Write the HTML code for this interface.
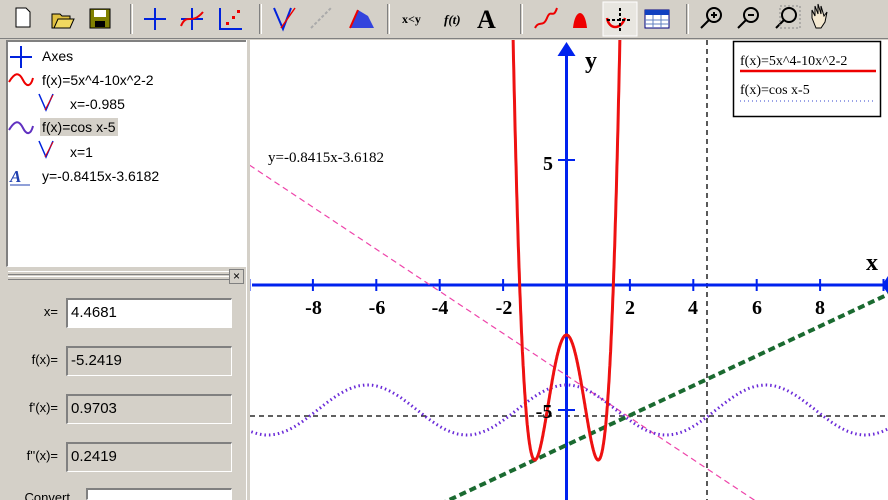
<!DOCTYPE html>
<html style="overflow:hidden;height:500px"><head><meta charset="utf-8">
<style>
body{margin:0;width:888px;height:500px;overflow:hidden;background:#d4d0c8;font-family:"Liberation Sans",Arial,sans-serif;position:relative}
.a{position:absolute}
.sep{position:absolute;top:4px;width:1px;height:30px;border-left:1px solid #808080;border-right:1px solid #fff}
.tree{position:absolute;left:6px;top:40px;width:238px;height:224px;background:#fff;border-top:2px solid #808080;border-left:2px solid #808080;border-right:1px solid #fff;border-bottom:1px solid #fff;font-size:14px;overflow:hidden}
.tree div{position:absolute;white-space:nowrap}
.lbl{position:absolute;font-size:13px;text-align:right;width:58px;left:0}
.fld{position:absolute;left:66px;border-top:2px solid #808080;border-left:2px solid #808080;border-right:1px solid #fff;border-bottom:1px solid #fff;font-size:15px;line-height:26px;padding-left:3px;box-sizing:border-box;width:166px;height:30px}
</style></head><body>
<div class="a" style="left:0;top:0;width:888px;height:38px;background:#d4d0c8;border-bottom:1px solid #808080"></div>
<svg class="a" style="left:0;top:0" width="888" height="38">
<path d="M16 8h10l4 4v15H16z" fill="#fff" stroke="#000"/>
<path d="M52 14h8l2 2h8v12H52z" fill="#e0c040" stroke="#000"/><path d="M54 28l4-9h16l-4 9z" fill="#f0d860" stroke="#000"/>
<rect x="90" y="9" width="20" height="19" fill="#808000" stroke="#000"/><rect x="94" y="10" width="12" height="7" fill="#fff"/><rect x="95" y="21" width="10" height="6" fill="#000"/>
<g stroke="#0022dd" stroke-width="2"><path d="M144 19h22M155 8v22"/></g>
<g stroke="#0022dd" stroke-width="2"><path d="M181 19h22M192 8v22"/></g><path d="M181 26c6-14 10 0 22-14" stroke="#e00" fill="none" stroke-width="2"/>
<path d="M220 8v21h22" stroke="#0022dd" stroke-width="2" fill="none"/><g fill="#e00"><rect x="226" y="22" width="3" height="3"/><rect x="232" y="16" width="3" height="3"/><rect x="237" y="10" width="3" height="3"/></g>
<path d="M274 8l9 21 8-21" stroke="#0022dd" stroke-width="2" fill="none"/><path d="M281 28l14-20" stroke="#e00" stroke-width="1.5"/>
<path d="M311 28l20-20" stroke="#aaa" stroke-width="2" stroke-dasharray="3 2"/>
<path d="M350 28l8-18 10 6 6 12z" fill="#3344dd"/><path d="M350 28l8-18" stroke="#e00" stroke-width="2"/>
<text x="402" y="23" font-family="Liberation Serif" font-size="12" font-weight="bold">x&lt;y</text>
<text x="444" y="24" font-family="Liberation Serif" font-size="13" font-style="italic" font-weight="bold">f(t)</text>
<text x="477" y="28" font-family="Liberation Serif" font-size="26" font-weight="bold">A</text>
<path d="M535 28c4-8 8 0 12-10s6 2 10-10" stroke="#e00" fill="none" stroke-width="2"/>
<path d="M573 28c2-20 12-20 14 0z" fill="#e00"/>
<rect x="603" y="2" width="34" height="34" fill="#e8e6e0" stroke="#fff"/>
<path d="M607 18c2 12 14 12 18 0" stroke="#e00" fill="none" stroke-width="2.5"/><path d="M620 8v24M607 20h24" stroke="#000" stroke-width="2" stroke-dasharray="3 2"/>
<rect x="645" y="10" width="24" height="18" fill="#fff" stroke="#000080"/><rect x="645" y="10" width="24" height="5" fill="#1040c0"/><path d="M645 20h24M645 24h24M653 15v13M661 15v13" stroke="#6080c0"/>
<g fill="none" stroke="#000" stroke-width="2"><circle cx="714" cy="15" r="7"/><path d="M709 20l-8 8M711 15h6M714 12v6"/><circle cx="751" cy="15" r="7"/><path d="M746 20l-8 8M748 15h6"/><circle cx="789" cy="15" r="7"/><path d="M784 20l-8 8"/></g>
<rect x="780" y="6" width="20" height="22" fill="none" stroke="#888" stroke-dasharray="2 2"/>
<path d="M816 28l-4-10v-8l3 6v-10l3 8v-10l3 10v-8l3 10 3-4-2 10-4 6z" fill="#f4e8d0" stroke="#000"/>
</svg>
<div class="sep" style="left:130px"></div><div class="sep" style="left:259px"></div><div class="sep" style="left:387px"></div><div class="sep" style="left:520px"></div><div class="sep" style="left:686px"></div>
<div class="tree">
<svg class="a" style="left:0;top:0" width="60" height="150">
<path d="M2 15h22M13 4v22" stroke="#0022dd" stroke-width="2"/>
<path d="M1 40c6-10 10-10 14-2s8 6 10-2" stroke="#e00" fill="none" stroke-width="2"/>
<path d="M31 52l7 16 7-16" stroke="#0022dd" fill="none" stroke-width="1.5"/><path d="M37 68l8-15" stroke="#e00"/>
<path d="M1 88c6-10 10-10 14-2s8 6 10-2" stroke="#6030c0" fill="none" stroke-width="2"/>
<path d="M31 99l7 16 7-16" stroke="#0022dd" fill="none" stroke-width="1.5"/><path d="M37 115l8-15" stroke="#e00"/>
<text x="2" y="140" font-family="Liberation Serif" font-size="17" font-style="italic" font-weight="bold" fill="#2040b0">A</text><path d="M2 143h20" stroke="#2040b0"/>
</svg>
<div style="left:34px;top:6px">Axes</div>
<div style="left:34px;top:30px">f(x)=5x^4-10x^2-2</div>
<div style="left:62px;top:54px">x=-0.985</div>
<div style="left:32px;top:76px;background:#d4d0c8;padding:1px 2px">f(x)=cos x-5</div>
<div style="left:62px;top:102px">x=1</div>
<div style="left:34px;top:126px">y=-0.8415x-3.6182</div>
</div>
<div class="a" style="left:8px;top:271px;width:225px;height:2px;border-top:1px solid #fff;border-bottom:1px solid #808080"></div>
<div class="a" style="left:8px;top:276px;width:225px;height:2px;border-top:1px solid #fff;border-bottom:1px solid #808080"></div>
<div class="a" style="left:229px;top:269px;width:13px;height:13px;border:1px solid #808080;font-size:12px;line-height:12px;text-align:center;background:#d4d0c8">×</div>
<div class="a" style="left:246px;top:40px;width:3px;height:460px;background:#d4d0c8;border-left:1px solid #fff;border-right:1px solid #808080"></div>
<div class="lbl" style="top:304px">x=</div><div class="fld" style="top:298px;background:#fff">4.4681</div>
<div class="lbl" style="top:352px">f(x)=</div><div class="fld" style="top:346px">-5.2419</div>
<div class="lbl" style="top:400px">f'(x)=</div><div class="fld" style="top:394px">0.9703</div>
<div class="lbl" style="top:448px">f''(x)=</div><div class="fld" style="top:442px">0.2419</div>
<div class="a" style="left:0;top:486px;width:246px;height:14px;overflow:hidden">
<div class="lbl" style="top:5px;width:70px;line-height:14px">Convert</div>
<div class="fld" style="top:2px;left:86px;width:146px;height:12px;background:#fff"></div>
</div>
<svg class="a" style="left:250px;top:40px;background:#fff" width="638" height="460">
<path d="M0 376H638" stroke="#000" stroke-dasharray="5 4" stroke-width="1.3"/>
<path d="M457 0V460" stroke="#000" stroke-dasharray="5 4" stroke-width="1.3"/>
<path d="M2 245H638M316.5 460V8" stroke="#0022ee" stroke-width="3"/>
<path d="M316.5 2l-9 14h18z" fill="#0022ee"/><path d="M638 236v18l-6-9z" fill="#0022ee"/>
<g id="ticks" stroke="#0022ee" stroke-width="2"></g>
<path id="pink" stroke="#ee44aa" stroke-width="1.2" stroke-dasharray="6 4" fill="none"/>
<path id="purp" stroke="#6a2ad8" stroke-width="3" stroke-dasharray="1.5 3" fill="none"/>
<path id="green" stroke="#1a6a30" stroke-width="4" stroke-dasharray="7 4" fill="none"/>
<path id="red" stroke="#ee1111" stroke-width="3" fill="none"/>
<g font-family="Liberation Serif" font-weight="bold" font-size="20" text-anchor="middle">
<text x="63.5" y="274">-8</text><text x="127" y="274">-6</text><text x="190" y="274">-4</text><text x="254" y="274">-2</text>
<text x="380" y="274">2</text><text x="443" y="274">4</text><text x="507" y="274">6</text><text x="570" y="274">8</text>
<text x="298" y="130">5</text><text x="294" y="378">-5</text>
<text x="622" y="230" font-size="24">x</text><text x="341" y="28" font-size="24">y</text>
</g>
<text x="18" y="122" font-family="Liberation Serif" font-size="15">y=-0.8415x-3.6182</text>
<rect x="483.5" y="1.5" width="147" height="75" fill="#fff" stroke="#000" stroke-width="1.5"/>
<text x="490" y="25" font-family="Liberation Serif" font-size="14">f(x)=5x^4-10x^2-2</text>
<path d="M490 31H626" stroke="#e00" stroke-width="2.5"/>
<text x="490" y="54" font-family="Liberation Serif" font-size="14">f(x)=cos x-5</text>
<path d="M490 61H626" stroke="#3344cc" stroke-width="1" stroke-dasharray="1 3"/>
</svg>
<script>
var ox=316.5,oy=245,sx=31.7,sy=25;
function P(f,a,b,n){var d="";for(var i=0;i<=n;i++){var x=a+(b-a)*i/n,y=f(x);d+=(i?"L":"M")+(ox+sx*x).toFixed(1)+" "+(oy-sy*y).toFixed(1);}return d;}
document.getElementById("red").setAttribute("d",P(function(x){var y=5*x*x*x*x-10*x*x-2;return Math.min(y,10.5)},-1.8,1.8,500));
document.getElementById("purp").setAttribute("d",P(function(x){return Math.cos(x)-5},-10.2,10.2,400));
document.getElementById("pink").setAttribute("d",P(function(x){return -0.8415*x-3.6182},-10,10.2,2));
document.getElementById("green").setAttribute("d",P(function(x){return 0.594*x-6.4},-4,10.2,2));
var t="";for(var k=-10;k<=10;k+=2){if(k)t+="M"+(ox+sx*k)+" 239v12";}t+="M308 120h17M308 370h17";
var g=document.getElementById("ticks");var pp=document.createElementNS("http://www.w3.org/2000/svg","path");pp.setAttribute("d",t);g.appendChild(pp);
</script>
</body></html>
